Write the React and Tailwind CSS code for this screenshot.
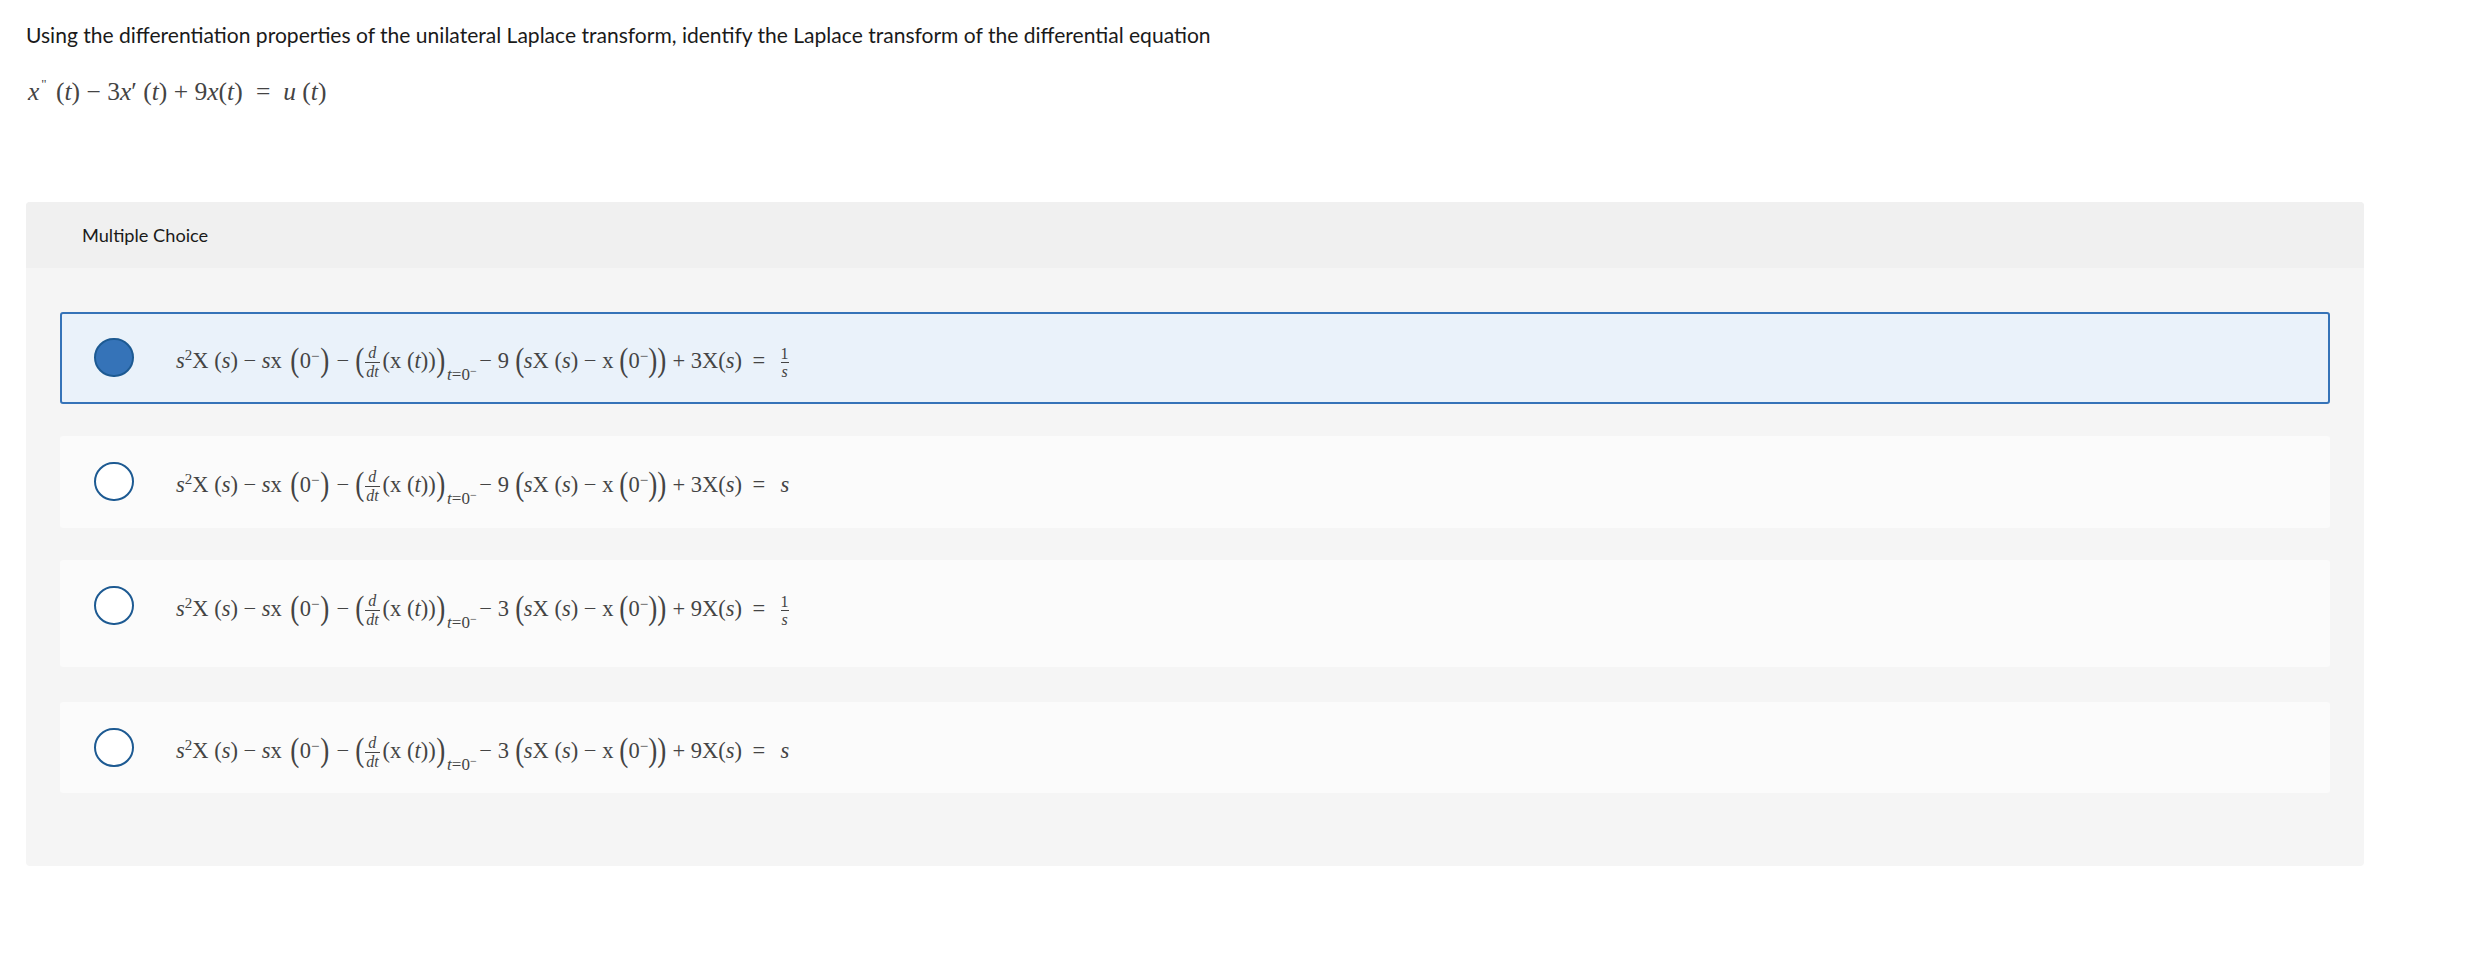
function I({ children }) {
  return <i className="italic">{children}</i>;
}

function Sup({ children, className }) {
  return <span className={`relative leading-none ${className}`}>{children}</span>;
}

function BigParen({ children, className = "" }) {
  return <span className={`inline-block origin-center scale-x-[0.8] text-[34px] leading-none font-light align-[-3px] mx-[-1px] ${className}`}>{children}</span>;
}

function Frac({ top, bottom }) {
  return (
    <span className="inline-flex flex-col items-center align-middle ml-[1px] mr-[3px] text-[16px] leading-[18px] italic">
      <span className="px-[1px]">{top}</span>
      <span className="self-stretch h-px bg-[#444]" />
      <span className="px-[1px]">{bottom}</span>
    </span>
  );
}

function Formula({ coefA, coefB, rhs }) {
  return (
    <div className="mt-[5px] h-10 flex items-center whitespace-pre text-[22.5px] leading-none text-[#444] font-['Liberation_Serif',serif]">
      <span>
        <I>s</I>
        <Sup className="text-[15px] align-[8px]">2</Sup>X (<I>s</I>) − <I>s</I>x <BigParen className="ml-[2px]">(</BigParen>0
        <Sup className="text-[15px] align-[7px]">−</Sup>
        <BigParen className="mr-[1px]">)</BigParen> − <BigParen>(</BigParen>
        <Frac top="d" bottom="dt" />
        (x (<I>t</I>))<BigParen>)</BigParen>
        <Sup className="text-[17px] align-[-12px] ml-[2px] mr-[-7px]">
          <I>t</I>=0<Sup className="text-[12px] align-[5px]">−</Sup>
        </Sup>{" "}
        <span className="ml-[4px]">−</span> {coefA} <BigParen>(</BigParen>
        <I>s</I>X (<I>s</I>) − x <BigParen>(</BigParen>0
        <Sup className="text-[15px] align-[7px]">−</Sup>
        <BigParen>)</BigParen>
        <BigParen className="mr-[-1px]">)</BigParen> + {coefB}X(<I>s</I>)<span className="ml-[5px]"> = </span> {rhs}
      </span>
    </div>
  );
}

function Option({ selected, heightClass, coefA, coefB, rhs }) {
  return (
    <div
      className={
        selected
          ? `flex items-start gap-[42px] pl-[32px] pt-[24px] rounded-[3px] border-2 border-[#3573b8] bg-[#eaf2fa] ${heightClass}`
          : `flex items-start gap-[42px] pl-[34px] pt-[26px] rounded-[3px] bg-[#fbfbfb] ${heightClass}`
      }
    >
      <span
        className={
          selected
            ? "block w-10 h-[39px] shrink-0 rounded-full border-2 border-[#1d5a92] bg-[#3573b8]"
            : "block w-10 h-[39px] shrink-0 rounded-full border-2 border-[#1d5a92] bg-white"
        }
      />
      <Formula coefA={coefA} coefB={coefB} rhs={rhs} />
    </div>
  );
}

export default function App() {
  const oneOverS = (
    <span className="inline-flex flex-col items-center align-middle text-[16px] leading-[17px] mx-[4px]">
      <span>1</span>
      <span className="self-stretch h-px bg-[#444]" />
      <span className="italic">s</span>
    </span>
  );
  const justS = <i className="italic ml-[4px]">s</i>;

  return (
    <div className="min-h-[964px] bg-white pl-[26px] pr-[110px] pt-[22px] text-[#1a1a1a]">
      <p className="text-[21.05px] leading-[26px] font-['Lato',sans-serif]">
        Using the differentiation properties of the unilateral Laplace transform, identify the Laplace transform of the differential equation
      </p>

      <div className="mt-[28px] h-[30px] flex items-center whitespace-pre text-[25.5px] leading-none text-[#444] font-['Liberation_Serif',serif]">
        <span className="ml-[2px]">
          <I>x</I>
          <Sup className="text-[13px] align-[12px] ml-[2px] mr-[3px]">"</Sup> (<I>t</I>) − 3<I>x</I>′ (<I>t</I>) + 9<I>x</I>(<I>t</I>)<span className="ml-[7px]"> = </span> <I>u</I> (<I>t</I>)
        </span>
      </div>

      <section className="mt-[96px] rounded-[4px] bg-[#f5f5f5] h-[664px]">
        <div className="h-[66px] pt-[1px] flex items-center pl-[56px] rounded-t-[4px] bg-[#f0f0f0] text-[18.2px] font-['Lato',sans-serif]">
          Multiple Choice
        </div>
        <div className="px-[34px] pt-[44px]">
          <Option selected heightClass="h-[92px]" coefA="9" coefB="3" rhs={oneOverS} />
          <div className="mt-[32px]">
            <Option heightClass="h-[92px]" coefA="9" coefB="3" rhs={justS} />
          </div>
          <div className="mt-[32px]">
            <Option heightClass="h-[107px]" coefA="3" coefB="9" rhs={oneOverS} />
          </div>
          <div className="mt-[35px]">
            <Option heightClass="h-[91px]" coefA="3" coefB="9" rhs={justS} />
          </div>
        </div>
      </section>
    </div>
  );
}
